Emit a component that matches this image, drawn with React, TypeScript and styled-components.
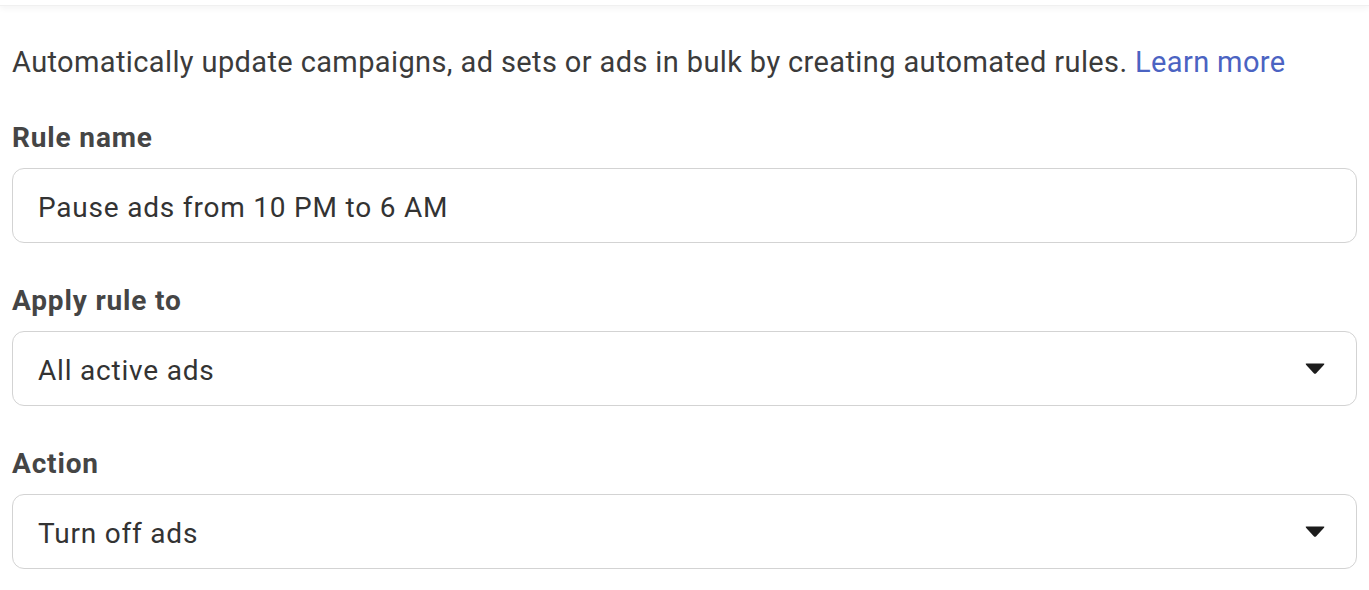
import React from "react";
import styled, { createGlobalStyle } from "styled-components";

const Global = createGlobalStyle`
  html, body { margin: 0; padding: 0; background: #ffffff; }
  body { font-family: Roboto, "Liberation Sans", Arial, sans-serif; }
`;

const Page = styled.div`
  width: 1369px;
  height: 590px;
  overflow: hidden;
  background: #fff;
  display: flex;
  flex-direction: column;
`;

const TopEdge = styled.div`
  height: 5px;
  background: #fff;
  box-shadow: 0 2px 6px rgba(0, 0, 0, 0.06);
  border-bottom: 1px solid #f0f0f0;
`;

const Content = styled.div`
  padding: 38px 12px 0 12px;
  display: flex;
  flex-direction: column;
`;

const Description = styled.p`
  margin: 0;
  font-size: 29px;
  line-height: 36px;
  color: #3b3b3b;
  letter-spacing: 0.38px;
  white-space: nowrap;
`;

const Link = styled.a`
  color: #4b63c2;
  text-decoration: none;
`;

const Field = styled.div<{ $first?: boolean }>`
  display: flex;
  flex-direction: column;
  margin-top: 41px;
`;

const Label = styled.label`
  font-size: 28px;
  line-height: 34px;
  font-weight: 700;
  color: #454545;
  letter-spacing: 0.85px;
  margin-bottom: 13px;
`;

const Box = styled.div`
  height: 73px;
  box-sizing: content-box;
  border: 1px solid #d3d3d3;
  border-radius: 12px;
  display: flex;
  align-items: center;
  justify-content: space-between;
  padding: 0 30px 0 25px;
  font-size: 28px;
  letter-spacing: 0.8px;
  color: #333;
`;

const Value = styled.span`
  padding-top: 3px;
`;

const Caret = () => (
  <svg width="22" height="13" viewBox="0 0 22 13" aria-hidden>
    <path
      d="M2.5 1.5 H19.5 Q21 1.5 20 2.8 L12.2 11.2 Q11 12.4 9.8 11.2 L2 2.8 Q1 1.5 2.5 1.5 Z"
      fill="#1c1c1c"
    />
  </svg>
);

export default function App() {
  return (
    <Page>
      <Global />
      <TopEdge />
      <Content>
        <Description>
          Automatically update campaigns, ad sets or ads in bulk by creating
          automated rules. <Link href="#">Learn more</Link>
        </Description>
        <Field>
          <Label>Rule name</Label>
          <Box>
            <Value>Pause ads from 10 PM to 6 AM</Value>
          </Box>
        </Field>
        <Field>
          <Label>Apply rule to</Label>
          <Box>
            <Value>All active ads</Value>
            <Caret />
          </Box>
        </Field>
        <Field>
          <Label>Action</Label>
          <Box>
            <Value>Turn off ads</Value>
            <Caret />
          </Box>
        </Field>
      </Content>
    </Page>
  );
}
